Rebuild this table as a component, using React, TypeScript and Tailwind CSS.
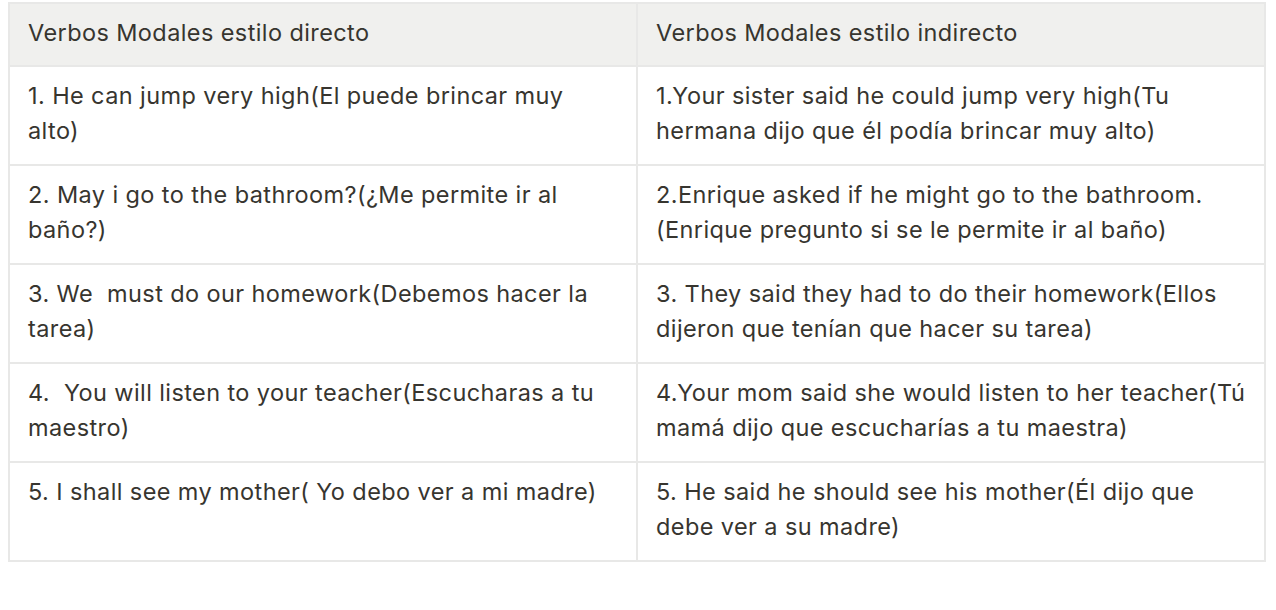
const rows: [string, string][] = [
  ["1. He can jump very high(El puede brincar muy alto)", "1.Your sister said he could jump very high(Tu hermana dijo que él podía brincar muy alto)"],
  ["2. May i go to the bathroom?(¿Me permite ir al baño?)", "2.Enrique asked if he might go to the bathroom.(Enrique pregunto si se le permite ir al baño)"],
  ["3. We  must do our homework(Debemos hacer la tarea)", "3. They said they had to do their homework(Ellos dijeron que tenían que hacer su tarea)"],
  ["4.  You will listen to your teacher(Escucharas a tu maestro)", "4.Your mom said she would listen to her teacher(Tú mamá dijo que escucharías a tu maestra)"],
  ["5. I shall see my mother( Yo debo ver a mi madre)", "5. He said he should see his mother(Él dijo que debe ver a su madre)"],
];

export default function App() {
  return (
    <div className="min-h-screen bg-white pt-[2px] pl-[8px] font-['Inter',sans-serif] text-[23.5px] leading-[35px] tracking-[0.4px] text-[#37352f]">
      <table className="w-[1258px] table-fixed border-collapse">
        <thead>
          <tr className="bg-[#f0f0ee]">
            <th className="w-1/2 border-2 border-[#e8e8e7] pl-[18px] pr-[20px] pt-[11px] pb-[15px] text-left font-normal whitespace-pre-wrap">
              Verbos Modales estilo directo
            </th>
            <th className="w-1/2 border-2 border-[#e8e8e7] pl-[18px] pr-[10px] pt-[11px] pb-[15px] text-left font-normal whitespace-pre-wrap">
              Verbos Modales estilo indirecto
            </th>
          </tr>
        </thead>
        <tbody>
          {rows.map(([a, b], i) => (
            <tr key={i}>
              <td className="h-[99px] border-2 border-[#e8e8e7] pl-[18px] pr-[20px] pt-[11px] pb-[15px] align-top whitespace-pre-wrap">{a}</td>
              <td className="h-[99px] border-2 border-[#e8e8e7] pl-[18px] pr-[10px] pt-[11px] pb-[15px] align-top whitespace-pre-wrap">{b}</td>
            </tr>
          ))}
        </tbody>
      </table>
    </div>
  );
}
